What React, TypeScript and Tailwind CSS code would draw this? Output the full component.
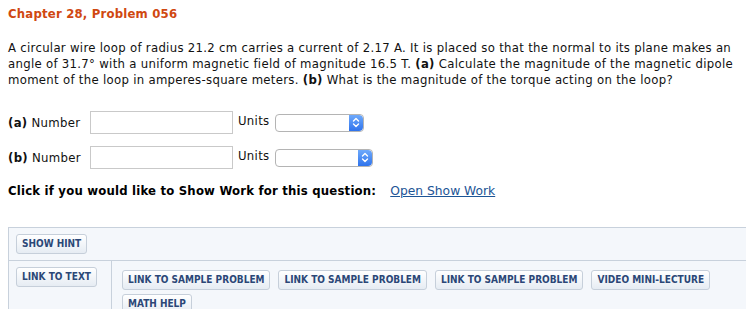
const body = { fontFamily: '"DejaVu Sans Condensed", "DejaVu Sans", Verdana, sans-serif' };

function Stepper() {
  return (
    <div className="flex h-full w-[14px] shrink-0 items-center justify-center rounded-r-[4px] bg-gradient-to-b from-[#6ea9fb] to-[#2f73ec]">
      <svg width="8" height="11" viewBox="0 0 8 11" fill="none" stroke="white" strokeWidth="1.4" strokeLinecap="round" strokeLinejoin="round">
        <path d="M1.5 4 L4 1.5 L6.5 4" />
        <path d="M1.5 7 L4 9.5 L6.5 7" />
      </svg>
    </div>
  );
}

function UnitSelect({ width }: { width: string }) {
  return (
    <div className={`flex h-[18px] ${width} overflow-hidden rounded-[4px] border border-[#b4b4b4] bg-white`}>
      <div className="flex-1" />
      <Stepper />
    </div>
  );
}

function AnswerRow({ part, selectWidth, className }: { part: string; selectWidth: string; className?: string }) {
  return (
    <div className={`flex h-[23px] items-center ${className ?? ""}`}>
      <span className="w-[82px] shrink-0 tracking-[0.3px]">
        <b>({part})</b> Number
      </span>
      <div className="h-[23px] w-[143px] shrink-0 border border-[#c9c9c9] bg-white" />
      <span className="ml-[5px] w-[37px] shrink-0 -translate-y-[2px] tracking-[0.3px]">Units</span>
      <UnitSelect width={selectWidth} />
    </div>
  );
}

function ToolButton({ label }: { label: string }) {
  return (
    <button className="h-[20px] rounded-[3px] border border-[#c6cfda] bg-gradient-to-b from-white to-[#e6ecf3] px-[5px] text-[10px] font-bold leading-none text-[#2b4777]">
      {label}
    </button>
  );
}

export default function App() {
  return (
    <div className="h-[309px] w-[746px] overflow-hidden bg-white text-[13px] leading-4 text-[#111]" style={body}>
      <div className="w-[780px] px-2">
        <div className="pt-[6px] font-bold tracking-[0.2px] text-[#d04811]">Chapter 28, Problem 056</div>

        <p className="mt-[18px] w-[734px] tracking-[0.3px]">
          A circular wire loop of radius 21.2 cm carries a current of 2.17 A. It is placed so that the normal to its plane makes an
          angle of 31.7° with a uniform magnetic field of magnitude 16.5 T. <b>(a)</b> Calculate the magnitude of the magnetic dipole
          moment of the loop in amperes-square meters. <b>(b)</b> What is the magnitude of the torque acting on the loop?
        </p>

        <AnswerRow part="a" selectWidth="w-[89px]" className="mt-[23px]" />
        <AnswerRow part="b" selectWidth="w-[98px]" className="mt-[12px]" />

        <div className="mt-[14px] flex">
          <span className="font-bold tracking-[0.2px] text-black">Click if you would like to Show Work for this question:</span>
          <a className="ml-[14px] text-[12.3px] text-[#1d5596] underline" style={{ fontFamily: '"DejaVu Sans", Verdana, sans-serif' }}>
            Open Show Work
          </a>
        </div>

        <div className="mt-[28px] border border-[#c8d1dc] bg-[#f4f7fb]">
          <div className="border-b border-[#c8d1dc] px-[7px] pb-[6px] pt-[6px]">
            <ToolButton label="SHOW HINT" />
          </div>
          <div className="flex">
            <div className="w-[103px] shrink-0 border-r border-[#c8d1dc] px-[7px] pb-[20px] pt-[6px]">
              <ToolButton label="LINK TO TEXT" />
            </div>
            <div className="flex flex-1 flex-wrap gap-x-[8px] gap-y-[4px] pl-[10px] pr-[10px] pt-[9px]">
              <ToolButton label="LINK TO SAMPLE PROBLEM" />
              <ToolButton label="LINK TO SAMPLE PROBLEM" />
              <ToolButton label="LINK TO SAMPLE PROBLEM" />
              <ToolButton label="VIDEO MINI-LECTURE" />
              <ToolButton label="MATH HELP" />
            </div>
          </div>
        </div>
      </div>
    </div>
  );
}
